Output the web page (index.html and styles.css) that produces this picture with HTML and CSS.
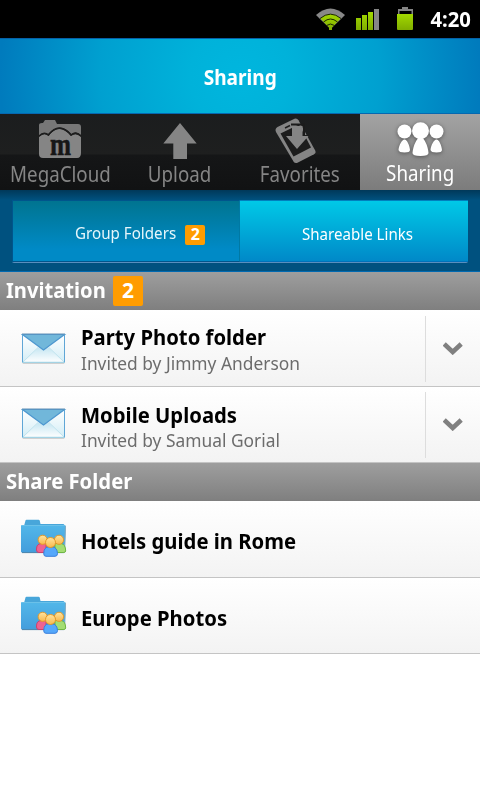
FILE: index.html
```html
<!DOCTYPE html>
<html lang="en">
<head>
<meta charset="utf-8">
<title>Sharing</title>
<link rel="stylesheet" href="styles.css">
</head>
<body>
<svg class="defs" width="0" height="0" aria-hidden="true">
  <defs>
    <linearGradient id="lime" x1="0" y1="0" x2="0" y2="1"><stop offset="0" stop-color="#a2d900"/><stop offset="1" stop-color="#80ad00"/></linearGradient>
    <linearGradient id="paper" x1="0" y1="0" x2="0" y2="1"><stop offset="0" stop-color="#c5e6f2"/><stop offset="1" stop-color="#fff"/></linearGradient>
    <linearGradient id="side" x1="0" y1="0" x2="0" y2="1"><stop offset="0" stop-color="#fff"/><stop offset="1" stop-color="#d2edf6"/></linearGradient>
    <linearGradient id="folderFill" x1="0" y1="0" x2="0" y2="1"><stop offset="0" stop-color="#52b7e9"/><stop offset="1" stop-color="#439ddc"/></linearGradient>
    <linearGradient id="skin" x1="0" y1="0" x2="0" y2="1"><stop offset="0" stop-color="#ffe5a0"/><stop offset="1" stop-color="#f8b84c"/></linearGradient>
    <symbol id="mail" viewBox="0 0 46 34">
      <rect x="1.500" y="3" width="42" height="27.800" rx="1" fill="#999" opacity=".55"/>
      <rect x="1.500" y="1.500" width="42" height="28" fill="#fff"/>
      <path d="M1.500 2 18.500 14.500 1.500 29.500ZM43.500 2 26.500 14.500 43.500 29.500Z" fill="url(#side)"/>
      <path d="M1.500 29.500 17.500 14.500H27.500L43.500 29.500Z" fill="url(#paper)"/>
      <path d="M2 29 17 14.500M43 29 28 14.500" stroke="#bfe3ee" fill="none"/>
      <path d="M1.500 1.500H43.500L22.500 17Z" fill="#71b7da" stroke="#4d97cf" stroke-width="1.200"/>
      <path d="M1.500 1.500V29.500M43.500 1.500V29.500" stroke="#5fa6d6"/>
      <path d="M1.500 29.300H43.500" stroke="#91cce2"/>
      <path d="M1 1H44" stroke="#6391b5"/>
    </symbol>
    <symbol id="folder" viewBox="0 0 46 40">
      <path d="M3 7 4.500 1.500Q4.700 .7 5.500 .7H17.500Q18.500 .7 18.700 1.500L19.500 5H42.500L44 6.500V10H3Z" fill="#48a6da"/>
      <path d="M0 7Q0 6 1 6H43.500Q45 6 44.900 7.500L43.500 33.500H1Q0 33.500 0 32.500Z" fill="url(#folderFill)"/>
      <path d="M1 6.500H44" stroke="#6bc1e9"/><path d="M1 33.600H43" stroke="#4682ab"/><path d="M44.500 7 43.600 33" stroke="#83abc3"/>
      <path d="M15.500 30Q15.500 25 20 24.500H25V33.500H18Q15.500 33.500 15.500 31Z" fill="#ee6291" stroke="#ce416c"/>
      <path d="M34 24.500H40Q44.500 25 44.700 32Q44.500 33.500 42.500 33.500H34Z" fill="#a4dd73" stroke="#70b643"/>
      <circle cx="21.700" cy="20.800" r="4.600" fill="url(#skin)" stroke="#e39828"/>
      <circle cx="38" cy="20.800" r="4.600" fill="url(#skin)" stroke="#e39828"/>
      <path d="M22.800 34Q23 28.500 27 28H32Q36 28.500 36.500 34.500Q36.500 37.300 34 37.300H25Q22.800 37.300 22.800 35Z" fill="#55a8fb" stroke="#387fdc"/>
      <circle cx="29.500" cy="23.500" r="5" fill="url(#skin)" stroke="#e39828"/>
    </symbol>
    <symbol id="chevron" viewBox="0 0 20 13"><path d="M1.200 2 9.700 10 18.200 2" fill="none" stroke="#808080" stroke-width="4.600"/></symbol>
  </defs>
</svg>

<div class="status">
  <svg class="wifi" width="30" height="23" viewBox="0 0 30 23">
    <path d="M0 7Q14.500-6 29 7L24.500 11.500 14.500 21 4.500 11.500Z" fill="#888"/>
    <path d="M4.500 10.500Q14.500 1.500 24.500 10.500L16 19.500V22H13V19.500Z" fill="url(#lime)"/>
    <path d="M4 10.500Q14.500 1.800 25 10.500M7.500 14Q14.500 8 21.500 14M10.500 17.500Q14.500 14.500 18.500 17.500" fill="none" stroke="#1b2500" stroke-width="1"/>
  </svg>
  <svg class="signal" width="24" height="22" viewBox="0 0 24 22">
    <path d="M0 10H5V22H0ZM6 7H11V22H6ZM12 4H17V22H12Z" fill="url(#lime)"/><path d="M18 1H23V22H18Z" fill="#868686"/>
  </svg>
  <svg class="battery" width="17" height="23" viewBox="0 0 17 23">
    <path d="M1 8V2H5V0H11V2H16V8Z" fill="#848484"/><path d="M2.500 4H14.500V8H2.500Z" fill="#000"/><path d="M0 7H16V22Q16 23 15 23H1Q0 23 0 22Z" fill="url(#lime)"/>
  </svg>
  <span class="t time">4:20</span>
</div>

<header class="header"><h1 class="t title">Sharing</h1></header>

<nav class="tabs">
  <a class="tab">
    <svg class="icon" width="44" height="42" viewBox="0 0 44 42">
      <path d="M1 10V6Q1 4 4 4H5L7 1H17L19 5H40Q43 5 43 8V16Q38 11 33.500 15Q22 2 10 15Q5 12 1 17Z" fill="#777"/>
      <path d="M1 18Q6 13 10.500 17Q21 3 33 17Q38 13 43 18V34Q43 39 39 39H5Q1 39 1 35Z" fill="#858585"/>
      <path d="M1 17Q6 12 10.500 16Q21 2 33 16Q38 12 43 17" fill="none" stroke="#1d1d1d" stroke-width="1.400"/>
      <text x="12" y="36" class="logo-letter" textLength="21" lengthAdjust="spacingAndGlyphs">m</text>
    </svg>
    <span class="t label mega">MegaCloud</span>
  </a>
  <a class="tab">
    <svg class="icon" width="44" height="42" viewBox="0 0 44 42"><path d="M22 4 38.700 24.500H29V40H15.300V24.500H5.300Z" fill="#858585"/></svg>
    <span class="t label upload">Upload</span>
  </a>
  <a class="tab">
    <svg class="icon phone" width="44" height="46" viewBox="0 0 44 46">
      <path d="M2.500 8 19.500-.3Q22-1.200 23.500 1.300L40.200 31.500Q41.400 34 39 35.300L22.500 43.800Q20 44.800 18.500 42.500L1 13Q-.5 9.800 2.500 8Z" fill="#858585"/>
      <path d="M5.500 14.500 24 5.500 36 28.500 18.500 37.500Z" fill="#1c1c1c"/>
      <path d="M10 9 15 6.500" stroke="#1c1c1c" stroke-width="1.500"/>
      <path d="M16 5.500H29V17H34" stroke="#1b1b1b" stroke-width="2" fill="none"/>
      <path d="M17 7H27.500V17H33.500L22 30 11 17H17Z" fill="#858585"/>
    </svg>
    <span class="t label fav">Favorites</span>
  </a>
  <a class="tab active">
    <svg class="icon people" width="48" height="42" viewBox="0 0 48 42">
      <g fill="#fff"><circle cx="8.500" cy="12.500" r="7"/><circle cx="40.500" cy="12.500" r="7"/><circle cx="24.500" cy="11.800" r="8.500"/>
      <path d="M8.500 20.500C11 20.500 13.500 26 14 31Q14 33.500 8.500 33.500T2.500 31C3 26 6 20.500 8.500 20.500ZM40.500 20.500C43 20.500 45.500 26 46 31Q46 33.500 40.500 33.500T34.500 31C35 26 38 20.500 40.500 20.500ZM24.500 18C28 18 32 27 32.500 34Q32.500 37 24.500 37T16.500 34C17 27 21 18 24.500 18Z"/></g>
    </svg>
    <span class="t label share">Sharing</span>
  </a>
</nav>

<div class="switch">
  <div class="segments">
    <a class="segment selected"><span class="t group">Group Folders</span><span class="badge small">2</span></a>
    <a class="segment"><span class="t links">Shareable Links</span></a>
  </div>
</div>

<main>
  <h2 class="section"><span class="t invitation">Invitation</span><span class="badge">2</span></h2>
  <div class="row first">
    <svg class="row-icon" width="46" height="34"><use href="#mail"/></svg>
    <div class="text"><span class="t name">Party Photo folder</span><span class="t by">Invited by Jimmy Anderson</span></div>
    <div class="more"><svg width="20" height="13"><use href="#chevron"/></svg></div>
  </div>
  <div class="row short second">
    <svg class="row-icon" width="46" height="34"><use href="#mail"/></svg>
    <div class="text"><span class="t name">Mobile Uploads</span><span class="t by">Invited by Samual Gorial</span></div>
    <div class="more"><svg width="20" height="13"><use href="#chevron"/></svg></div>
  </div>
  <h2 class="section"><span class="t">Share Folder</span></h2>
  <div class="row folder-row">
    <svg class="row-icon" width="46" height="40"><use href="#folder"/></svg>
    <div class="text"><span class="t name">Hotels guide in Rome</span></div>
  </div>
  <div class="row folder-row short">
    <svg class="row-icon" width="46" height="40"><use href="#folder"/></svg>
    <div class="text"><span class="t name">Europe Photos</span></div>
  </div>
</main>
</body>
</html>
```

FILE: styles.css
```css
* { box-sizing: border-box; }
body { margin: 0; width: 480px; height: 800px; overflow: hidden; background: #fff; font: 21px/26px "Noto Sans", "Open Sans", sans-serif; }
.defs { display: block; height: 0; }
h1, h2 { margin: 0; font-size: 21px; font-weight: 700; }
svg { display: block; flex: none; }

/* --fit narrows each label horizontally around its anchor */
.t { display: inline-block; white-space: nowrap; transform: scaleX(var(--fit, .965)); transform-origin: left; }

.status { display: flex; height: 38px; background: #000; color: #fff; padding: 7px 9px 0 316px; }
.wifi { margin-top: 1px; }
.signal { margin: 1px 0 0 10px; }
.battery { margin-left: 17px; }
.time { margin-left: auto; margin-top: -1px; font-weight: 700; transform-origin: right; }

.header { height: 76px; display: flex; align-items: center; justify-content: center; padding-top: 2px; color: #fff; border-top: 1px solid #0561a8; border-bottom: 1px solid #0668b0; background: radial-gradient(circle at 50% 50%, #00b6de 0, #00b2da 50px, #00a0d0 140px, #007bbd 240px); }
.title { --fit: .908; transform-origin: center; }

.tabs { display: grid; grid-template-columns: repeat(4, 120px); grid-template-rows: 76px; height: 76px; background: linear-gradient(#1b1d1e 0, #1e1f1f 40px, #151617 41px, #111213 100%); }
.tab { display: flex; flex-direction: column; align-items: center; justify-content: space-between; padding: 5px 0 4px; color: #858585; }
.label { --fit: .892; line-height: 24px; transform-origin: center; }
.tab .icon { overflow: visible; }
.active { background: linear-gradient(#a3a3a3, #7c7c7c); color: #fff; padding-bottom: 5px; }
.people { filter: drop-shadow(0 1px 2px #555); }
.phone { margin: 0 0 -4px -7px; }
.logo-letter { font: 700 31px "Liberation Serif", serif; fill: #171717; stroke: #171717; stroke-width: .5px; }

.switch { height: 82px; padding: 10px 12px 0; background: linear-gradient(#003859, #00517f 10px, #00517f); border-bottom: 1px solid #0069b0; }
.segments { display: grid; grid-template-columns: 228px 228px; height: 63px; border-bottom: 1px solid #5a8ebd; border-radius: 2px; }
.segment { display: flex; align-items: center; justify-content: center; height: 62px; padding: 5px 0 0 8px; font-size: 17px; color: #fff; background: linear-gradient(#00c9e7, #0089c8); border-top: 1px solid #0080bd; border-bottom: 1px solid #0071ba; }
.selected { justify-content: flex-start; padding: 3px 0 0 62px; color: #e6f6fb; background: linear-gradient(#007490, #008ac6 80%); border: 1px solid #00558c; border-right-color: #0079a4; }
.group { --fit: .892; margin-right: -3px; }
.links { --fit: .888; transform-origin: center; }
.badge { display: flex; align-items: center; justify-content: center; width: 30px; height: 30px; border-radius: 2px; background: #ff9c00; color: #fff; font-size: 21px; font-weight: 700; line-height: 1; padding-bottom: 1px; }
.small { width: 20px; height: 20px; margin-top: 4px; font-size: 16px; }

.section { display: flex; align-items: center; height: 38px; padding-left: 6px; background: linear-gradient(#9e9e9e, #7f7f7f); color: #fff; }
.section .t { margin-top: -2px; }
.invitation { --fit: .96; margin-right: 3px; }
.row { display: flex; height: 77px; background: linear-gradient(#fff, #f3f3f3); border-bottom: 1px solid #c4c4c4; }
.short { height: 76px; }
.row-icon { margin: 23px 14px 0 21px; }
.text { display: flex; flex-direction: column; width: 344px; padding-top: 15px; }
.name { font-weight: 700; color: #000; }
.by { font-size: 18px; line-height: 24px; color: #6c6c6c; }
.first .text { padding-top: 14px; }
.first .by { margin-top: 1px; }
.more { width: 55px; height: 66px; margin-top: 6px; padding-bottom: 1px; border-left: 1px solid #ddd; display: flex; align-items: center; justify-content: center; }
.second .row-icon { margin-top: 21px; }
.second .more { margin-top: 5px; }
.folder-row .row-icon { margin-top: 18px; }
.folder-row .text { padding-top: 27px; }
```
